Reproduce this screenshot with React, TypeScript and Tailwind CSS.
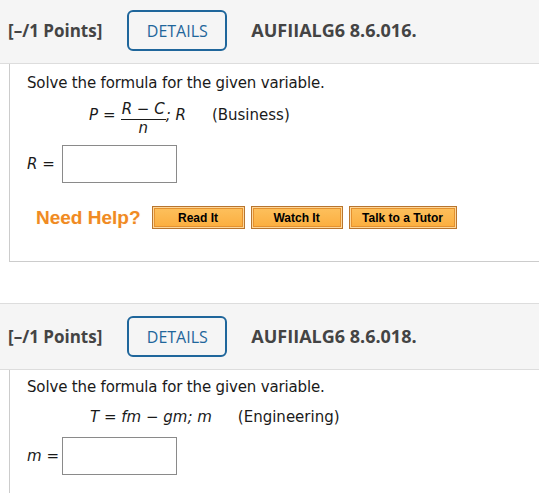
import React from 'react';

const headFont = { fontFamily: '"Open Sans", "Liberation Sans", sans-serif' };
const bodyFont = { fontFamily: '"DejaVu Sans", Verdana, sans-serif' };
const helpFont = { fontFamily: '"Liberation Sans", Arial, sans-serif' };

const QuestionHeader: React.FC<{ code: string; className?: string }> = ({ code, className }) => (
  <div
    className={`flex items-center h-[67px] pl-2 bg-[#f5f5f5] border-y border-[#dddddd] text-[#444] ${className ?? ''}`}
    style={headFont}
  >
    <span className="text-[17px] font-bold">[–/1 Points]</span>
    <button className="ml-[25px] w-[100px] h-[41px] border-2 border-[#1f669b] rounded-[6px] text-[#1f669b] text-[16px] bg-transparent">
      DETAILS
    </button>
    <span className="ml-[24px] text-[18px] font-bold">{code}</span>
  </div>
);

const HelpButton: React.FC<{ label: string; width: string }> = ({ label, width }) => (
  <button
    className={`${width} h-[23px] border border-[#b8752f] bg-gradient-to-b from-[#fdc15e] to-[#fbad3c] shadow-[inset_0_0_0_1px_#fdd79a,inset_0_0_0_2px_#e5912e] text-[12px] font-bold text-black`}
    style={helpFont}
  >
    {label}
  </button>
);

const Input: React.FC = () => (
  <div className="w-[115px] h-[38px] border border-[#8a8a8a] bg-white" />
);

export default function App() {
  return (
    <div className="w-[539px] h-[493px] overflow-hidden bg-white">
      <QuestionHeader code="AUFIIALG6 8.6.016." className="-mt-[3px]" />
      <div className="ml-[9px] border-l border-b border-[#cccccc] pl-[17px] pt-[9px] pb-[32px] text-[#1a1a1a]" style={bodyFont}>
        <p className="text-[15px] leading-[20px] tracking-[-0.15px]">Solve the formula for the given variable.</p>
        <div className="mt-[4px] ml-[62px] flex items-center h-[36px] text-[15px]">
          <span className="italic">P</span>
          <span className="mx-[5px]">=</span>
          <span className="inline-flex flex-col items-center mt-[8px]">
            <span className="italic leading-[15px] pb-[2px] px-[1px]">R − C</span>
            <span className="w-full h-px bg-[#1a1a1a]" />
            <span className="italic leading-[15px] pt-[1px]">n</span>
          </span>
          <span className="italic">; R</span>
          <span className="ml-[26px] not-italic">(Business)</span>
        </div>
        <div className="mt-[12px] flex items-center">
          <span className="text-[15px]">
            <span className="italic">R</span> =
          </span>
          <span className="ml-[7px]">
            <Input />
          </span>
        </div>
        <div className="mt-[23px] ml-[9px] h-[23px] flex items-center">
          <span className="text-[19px] leading-[23px] font-bold text-[#f08a22] [text-shadow:0_0_2px_#fff3e0]" style={helpFont}>
            Need Help?
          </span>
          <div className="ml-[11px] flex gap-[6px]">
            <HelpButton label="Read It" width="w-[93px]" />
            <HelpButton label="Watch It" width="w-[92px]" />
            <HelpButton label="Talk to a Tutor" width="w-[108px]" />
          </div>
        </div>
      </div>

      <div className="h-[41px]" />

      <QuestionHeader code="AUFIIALG6 8.6.018." />
      <div className="ml-[9px] border-l border-[#cccccc] pl-[17px] pt-[7px] pb-[30px] text-[#1a1a1a]" style={bodyFont}>
        <p className="text-[15px] leading-[20px] tracking-[-0.15px]">Solve the formula for the given variable.</p>
        <div className="mt-[10px] ml-[63px] flex items-center h-[20px] text-[15px]">
          <span className="italic whitespace-pre">T = fm − gm; m</span>
          <span className="ml-[26px]">(Engineering)</span>
        </div>
        <div className="mt-[10px] flex items-center">
          <span className="text-[15px]">
            <span className="italic">m</span> =
          </span>
          <span className="ml-[3px]">
            <Input />
          </span>
        </div>
      </div>
    </div>
  );
}
